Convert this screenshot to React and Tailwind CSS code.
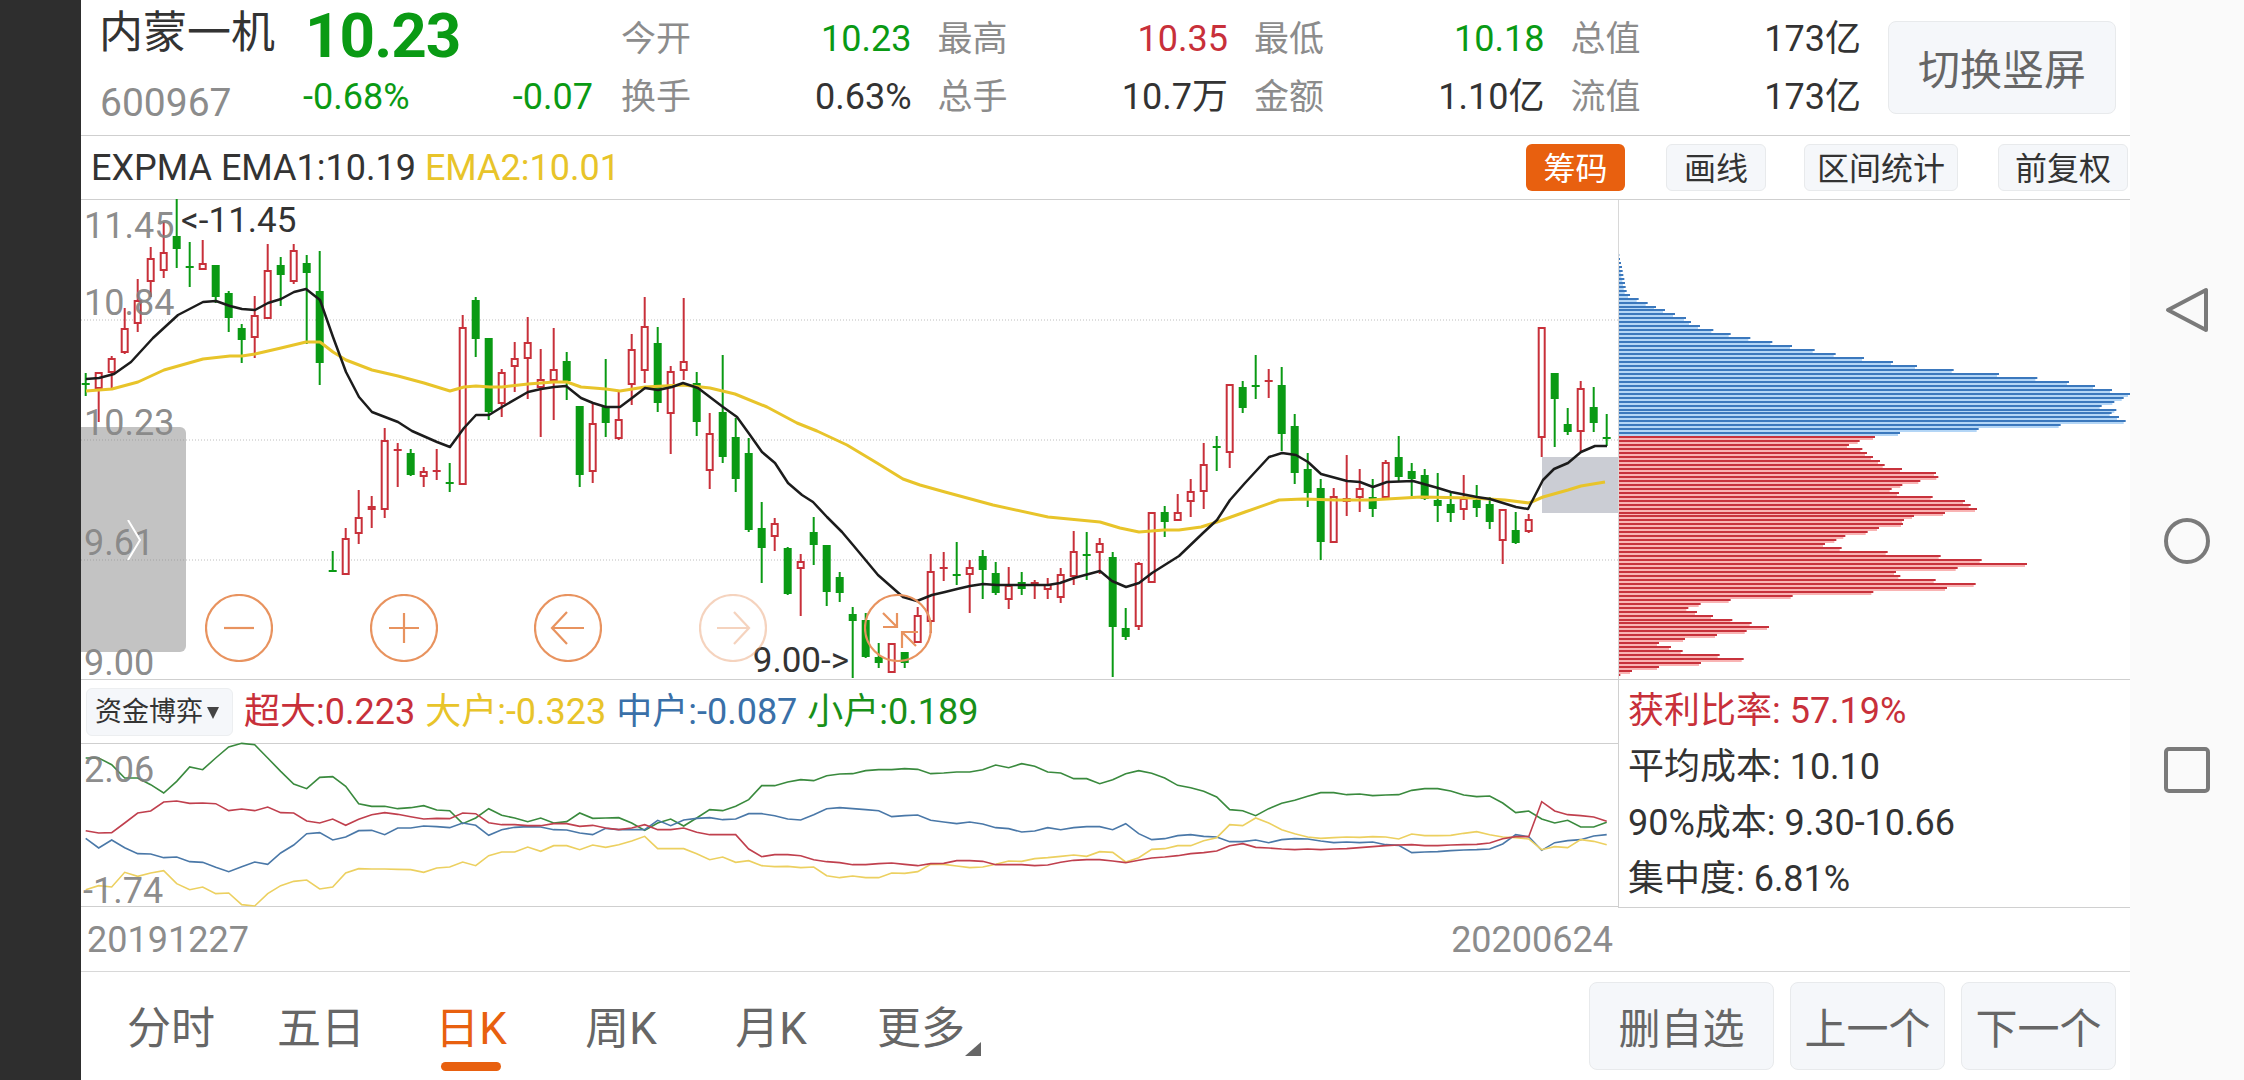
const GREEN = '#0a9a14'
const RED = '#c8303a'

// [type, bodyTop, bodyBottom, wickTop, wickBottom] in page px, one per trading day
const CANDLES = [
  ['g',383,385,373,396],['r',372,389,372,422],['r',358,373,356,388],['r',328,353,308,354],['r',300,324,279,332],
  ['r',258,282,247,297],['r',252,271,222,278],['g',236,249,199,268],['g',266,268,242,287],['r',263,270,240,270],
  ['g',265,297,265,303],['g',293,318,291,332],['g',328,340,324,363],['r',315,338,296,358],['r',270,319,244,319],
  ['g',265,275,257,306],['r',250,282,244,284],['g',263,273,255,344],['g',291,363,251,385],['g',570,572,551,572],
  ['r',538,575,528,575],['r',517,534,490,544],['r',506,510,496,528],['r',440,510,428,518],['r',449,451,443,487],
  ['g',453,475,449,476],['r',471,477,467,487],['r',470,472,449,480],['g',482,484,463,492],['r',327,485,315,485],
  ['g',300,339,297,357],['g',338,412,338,420],['r',372,404,369,417],['r',358,367,342,392],['r',342,359,317,399],
  ['r',379,388,349,437],['r',369,381,328,420],['g',361,381,352,400],['g',406,475,406,487],['r',423,472,403,483],
  ['g',407,423,359,437],['r',419,439,392,440],['r',349,385,334,405],['r',326,371,297,383],['g',343,403,327,412],
  ['r',371,414,366,454],['r',361,371,298,380],['g',383,422,372,436],['r',433,471,413,489],['g',412,457,355,463],
  ['g',437,479,418,492],['g',453,530,438,532],['g',528,548,502,583],['r',523,537,518,551],['g',548,594,547,595],
  ['r',561,569,554,616],['g',532,545,517,565],['g',545,592,545,606],['g',577,593,572,602],['g',614,621,607,678],
  ['g',620,657,613,658],['g',657,663,643,668],['r',643,673,643,673],['g',652,663,652,668],['r',615,643,607,643],
  ['r',571,622,554,633],['r',567,569,552,581],['g',574,576,542,585],['r',567,575,560,613],['g',556,570,550,599],
  ['g',573,593,562,595],['r',585,600,567,609],['g',582,589,572,595],['r',582,584,580,599],['r',584,590,578,599],
  ['r',574,598,568,603],['r',551,577,531,585],['g',554,556,532,580],['r',543,553,538,574],['g',557,627,552,677],
  ['g',628,637,608,640],['r',563,627,562,630],['r',512,583,512,583],['g',512,522,506,537],['r',512,521,494,521],
  ['r',491,502,479,517],['r',464,492,443,509],['g',446,448,436,471],['r',384,453,384,468],['g',387,408,381,413],
  ['g',385,387,355,399],['r',380,382,369,398],['g',385,434,367,451],['g',426,473,414,484],['g',469,493,453,507],
  ['g',488,542,479,560],['r',496,543,488,543],['r',498,502,455,516],['r',488,498,469,512],['g',497,509,479,517],
  ['r',462,498,460,498],['g',457,477,436,481],['g',471,479,463,496],['g',475,499,469,500],['g',500,506,473,522],
  ['g',504,513,493,522],['r',498,510,475,520],['g',500,508,485,517],['g',504,522,497,529],['r',509,541,509,564],
  ['g',530,543,512,544],['r',519,532,514,533],['r',327,438,327,457],['g',373,399,373,447],['g',424,432,408,435],
  ['r',388,432,381,452],['g',407,423,387,432],['g',437,439,414,446],
]

const EMA1 = '86,379 99,378 114,374 131,362 153,338 178,315 203,302 216,301 230,306 242,309 255,310 268,303 281,299 294,292 306,289 320,300 333,337 346,372 359,397 372,412 398,422 412,431 437,442 450,447 464,428 476,415 489,415 502,407 528,392 541,389 554,387 566,386 581,398 593,403 606,407 620,407 632,398 645,388 658,390 672,387 683,383 698,388 723,407 737,417 750,435 762,452 775,463 788,483 802,495 813,502 827,517 842,532 853,545 878,575 903,597 917,601 932,595 945,592 957,589 970,586 983,584 997,585 1022,585 1035,585 1048,585 1060,583 1074,578 1100,571 1112,581 1126,587 1139,583 1152,573 1179,556 1203,533 1217,520 1230,500 1245,483 1269,457 1282,453 1296,455 1308,462 1321,474 1347,481 1360,482 1373,487 1387,482 1413,481 1438,488 1451,492 1477,497 1490,499 1516,507 1528,509 1543,480 1554,469 1568,463 1581,452 1595,446 1607,446'
const EMA2 = '86,391 112,389 138,382 164,370 203,359 230,356 242,356 255,354 281,348 306,342 320,342 333,352 346,360 372,370 398,376 424,383 450,391 464,387 476,386 490,387 502,387 528,384 554,382 567,382 581,387 606,389 620,391 645,387 683,385 710,388 735,394 767,407 797,423 817,431 847,445 877,463 903,479 920,485 945,492 993,505 1048,517 1100,522 1120,528 1139,532 1164,530 1179,530 1201,527 1217,522 1245,512 1279,500 1303,499 1336,500 1370,500 1421,497 1472,498 1505,500 1529,503 1543,497 1568,490 1581,486 1605,482'

// money flow lines, y values at 3x from the top of the sub chart
const FLOW = [
  { color: '#3a8a3e', ys: [45,45,65,105,105,125,150,115,72,80,45,12,1,5,45,85,123,137,103,101,130,182,190,190,197,194,188,201,203,242,225,197,217,225,236,225,240,236,210,226,
    225,224,240,262,240,228,249,225,200,203,190,170,128,128,117,110,113,98,93,92,83,80,80,77,79,92,90,87,87,80,66,74,62,70,87,90,107,107,122,110,
    92,83,91,105,127,134,145,162,200,203,218,197,181,172,160,149,149,155,153,158,156,155,142,137,137,144,156,161,159,180,209,204,228,240,232,252,252,238] },
  { color: '#4a78a8', ys: [286,315,291,314,332,333,344,342,356,358,373,386,371,357,364,330,306,272,269,291,282,263,262,275,255,255,249,251,254,240,247,277,260,253,251,252,260,261,270,275,
    256,260,260,260,232,248,231,226,224,230,228,212,212,218,228,231,215,197,194,197,200,203,221,218,216,232,237,242,237,243,254,257,267,264,254,260,254,251,251,260,
    242,272,290,287,278,275,280,282,296,296,291,299,290,287,288,294,299,297,299,297,305,307,329,327,326,323,321,320,318,303,275,281,322,299,293,290,279,275] },
  { color: '#ecd060', ys: [440,428,432,388,400,390,383,422,440,432,452,450,485,489,452,428,415,411,438,432,390,377,378,378,379,380,388,375,372,357,368,338,327,327,312,325,308,308,320,306,
    313,305,294,280,317,317,317,332,350,342,358,353,368,371,370,374,372,398,404,399,404,404,390,391,386,364,364,369,374,372,364,354,355,347,344,340,336,340,326,328,
    357,344,319,317,308,308,293,284,245,248,225,240,260,272,282,286,284,282,283,281,282,288,273,278,278,277,271,266,275,282,284,288,320,311,314,290,295,305] },
  { color: '#c0404e', ys: [263,270,269,240,210,204,177,174,181,180,182,203,198,203,192,209,210,234,240,228,247,229,215,209,214,221,228,226,227,210,212,239,245,245,248,248,242,242,250,247,
    255,260,255,245,260,260,255,268,275,275,275,318,341,335,335,338,350,356,359,365,365,362,360,364,368,362,361,353,353,355,365,365,365,368,366,358,352,350,350,354,
    359,352,345,342,338,332,329,324,308,302,313,315,318,320,318,320,318,317,314,311,308,306,305,308,308,306,305,304,300,287,281,281,176,204,215,218,222,235] },
]

// chip distribution, bar ends at 3x
const CHIP_BLUE = [28,30,33,36,38,40,43,45,47,50,60,86,113,138,165,195,228,243,270,310,362,421,487,546,614,677,762,849,921,1031,1167,1282,1377,1455,1506,1560,1541,1513,1475,1519,1505,1527,1547,1352,1106,870]
const CHIP_RED = [795,749,717,757,771,789,810,824,876,978,985,931,877,845,867,968,1065,1082,1101,1005,912,882,879,807,773,706,679,645,695,833,992,1115,1251,1043,858,871,977,1097,1011,790,548,362,272,235,261,309,367,425,477,410,321,225,147,183,218,329,401,273,147,66,31]

const FONT = "Roboto, 'Noto Sans CJK SC', sans-serif"
const candleX = i => 85.7 + 13 * i

function Candle({ c, i }) {
  const [type, top, bottom, wickTop, wickBottom] = c
  const x = candleX(i)
  const color = type === 'g' ? GREEN : RED
  return (
    <g>
      <line x1={x} x2={x} y1={wickTop} y2={wickBottom} stroke={color} strokeWidth="2" />
      {type === 'g' || bottom - top < 4 ? (
        <rect x={x - 4} y={top} width="8" height={bottom - top} fill={color} />
      ) : (
        <rect x={x - 3} y={top + 1} width="6" height={bottom - top - 2} fill="#fff" stroke={color} strokeWidth="2" />
      )}
    </g>
  )
}

function MainChart() {
  const labels = [['11.45', 238], ['10.84', 315], ['10.23', 435], ['9.61', 555], ['9.00', 675]]
  return (
    <svg width="1537" height="479" viewBox="81 200 1537 479" className="block overflow-visible" fontFamily={FONT}>
      {[320, 440, 560].map(y => (
        <line key={y} x1="81" x2="1618" y1={y} y2={y} stroke="#bdbdbd" strokeDasharray="1 2" />
      ))}
      <rect x="1542" y="457" width="76" height="56" fill="#cbcdd4" />
      {CANDLES.map((c, i) => <Candle key={i} c={c} i={i} />)}
      <polyline points={EMA2} fill="none" stroke="#e8c42a" strokeWidth="3" strokeLinejoin="round" />
      <polyline points={EMA1} fill="none" stroke="#1c1c1c" strokeWidth="2.5" strokeLinejoin="round" />
      {labels.map(([t, y]) => (
        <text key={t} x="84" y={y} fontSize="36" fill="#7d7d7d" fillOpacity="0.9">{t}</text>
      ))}
      <text x="181" y="232" fontSize="35" fill="#333">{'<-11.45'}</text>
      <text x="849" y="672" fontSize="35" fill="#333" textAnchor="end">{'9.00->'}</text>
    </svg>
  )
}

function ChipChart() {
  const bars = [...CHIP_BLUE.map(v => [v, '#3b78bd', '#b4d6f6']), ...CHIP_RED.map(v => [v, '#c8323c', '#f9b4b4'])]
  return (
    <svg width="511" height="479" viewBox="1619 200 511 479" className="block">
      {bars.map(([v, dark, light], k) => {
        const y = Math.round(254 + 3.962 * k)
        const w = (v - 24) / 3
        return (
          <g key={k}>
            <rect x="1618" y={y + 2} width={w - 2} height="2" fill={light} />
            <rect x="1618" y={y} width={w} height="2" fill={dark} />
          </g>
        )
      })}
    </svg>
  )
}

function FlowChart() {
  return (
    <svg width="1537" height="162" viewBox="81 744 1537 162" className="block overflow-visible" fontFamily={FONT}>
      {FLOW.map(s => (
        <polyline
          key={s.color}
          points={s.ys.map((v, i) => `${candleX(i)},${743 + v / 3}`).join(' ')}
          fill="none"
          stroke={s.color}
          strokeWidth="1.6"
        />
      ))}
      <text x="84" y="782" fontSize="36" fill="#7d7d7d" fillOpacity="0.9">2.06</text>
      <text x="83" y="903" fontSize="36" fill="#7d7d7d" fillOpacity="0.9">-1.74</text>
    </svg>
  )
}

function RoundIcon({ left, faded, children }) {
  return (
    <div className={`absolute top-[394px] ${left} ${faded ? 'opacity-40' : ''}`}>
      <svg width="68" height="68" viewBox="0 0 68 68" fill="none" stroke="#e8935f" strokeWidth="2.2">
        <circle cx="34" cy="34" r="33" />
        {children}
      </svg>
    </div>
  )
}

function Quote({ label, value, color = 'text-[#333]' }) {
  return (
    <div className="flex items-center justify-between pr-[26px] text-[36px] leading-none">
      <span className="text-[35px] text-[#8c8c8c]">{label}</span>
      <span className={color}>{value}</span>
    </div>
  )
}

function GrayBtn({ className, children }) {
  return (
    <button className={`flex items-center justify-center rounded-lg border border-[#e8eaec] bg-[#f5f7fa] ${className}`}>
      {children}
    </button>
  )
}

export default function App() {
  const tabs = ['分时', '五日', '日K', '周K', '月K', '更多']
  return (
    <div className="flex h-screen w-full overflow-hidden bg-white" style={{ fontFamily: FONT }}>
      <div className="w-[81px] shrink-0 bg-[#2e2e2e]" />

      <div className="flex w-[2049px] shrink-0 flex-col">
        {/* Quote header */}
        <div className="flex h-[136px] border-b border-[#cfcfcf]">
          <div className="flex w-[540px] shrink-0 flex-col pl-[18px]">
            <div className="flex h-[72px] items-center">
              <span className="-mt-[6px] w-[206px] text-[44px] leading-none text-[#333]">内蒙一机</span>
              <span className="text-[62px] font-bold leading-none tracking-[-1px] text-[#0a9a14]">10.23</span>
            </div>
            <div className="flex h-[63px] items-center">
              <span className="w-[204px] pl-[1px] text-[39px] leading-none text-[#8c8c8c]">600967</span>
              <span className="-mt-[14px] text-[36px] leading-none text-[#0a9a14]">-0.68%</span>
              <span className="-mt-[14px] ml-auto pr-[28px] text-[36px] leading-none text-[#0a9a14]">-0.07</span>
            </div>
          </div>
          <div className="grid w-[1266px] shrink-0 grid-cols-4 grid-rows-[58px_58px] pt-[10px]">
            <Quote label="今开" value="10.23" color="text-[#0a9a14]" />
            <Quote label="最高" value="10.35" color="text-[#c8303a]" />
            <Quote label="最低" value="10.18" color="text-[#0a9a14]" />
            <Quote label="总值" value="173亿" />
            <Quote label="换手" value="0.63%" />
            <Quote label="总手" value="10.7万" />
            <Quote label="金额" value="1.10亿" />
            <Quote label="流值" value="173亿" />
          </div>
          <GrayBtn className="ml-[1px] mt-[21px] h-[93px] w-[228px] pt-[6px] text-[42px] text-[#666]">切换竖屏</GrayBtn>
        </div>

        {/* Indicator toolbar */}
        <div className="flex h-[64px] items-center border-b border-[#cfcfcf] pl-[10px] pr-[2px]">
          <span className="text-[36px] leading-none text-[#333]">EXPMA EMA1:10.19 <span className="text-[#e8c42a]">EMA2:10.01</span></span>
          <div className="ml-auto flex items-center text-[32px] text-[#333]">
            <span className="flex h-[47px] w-[99px] items-center justify-center rounded-md bg-[#e8600f] pt-[2px] text-white">筹码</span>
            <GrayBtn className="ml-[41px] h-[47px] w-[100px] rounded-md pt-[2px]">画线</GrayBtn>
            <GrayBtn className="ml-[38px] h-[47px] w-[154px] rounded-md pt-[2px]">区间统计</GrayBtn>
            <GrayBtn className="ml-[40px] h-[47px] w-[130px] rounded-md pt-[2px]">前复权</GrayBtn>
          </div>
        </div>

        {/* K line + chip distribution */}
        <div className="flex h-[480px] border-b border-[#cfcfcf]">
          <div className="relative w-[1537px] shrink-0">
            <MainChart />
            <div className="absolute left-0 top-[227px] flex h-[225px] w-[105px] items-center justify-center rounded-r-md bg-[#888888]/50">
              <svg width="16" height="40" viewBox="0 0 16 40" fill="none" stroke="#fff" strokeWidth="2">
                <polyline points="2,0 14,20 2,40" />
              </svg>
            </div>
            <RoundIcon left="left-[124px]"><path d="M19 34H49" /></RoundIcon>
            <RoundIcon left="left-[289px]"><path d="M19 34H49M34 19V49" /></RoundIcon>
            <RoundIcon left="left-[453px]"><path d="M50 34H18M33 18L18 34L33 50" /></RoundIcon>
            <RoundIcon left="left-[618px]" faded><path d="M18 34H50M35 18L50 34L35 50" /></RoundIcon>
            <RoundIcon left="left-[783px]"><path d="M19 19L33 33M19 33H33V19M38 38L52 52M38 54V38H54" /></RoundIcon>
          </div>
          <div className="flex-1 border-l border-[#d8d8d8]">
            <ChipChart />
          </div>
        </div>

        {/* Money flow + chip stats */}
        <div className="flex h-[228px]">
          <div className="w-[1537px] shrink-0">
            <div className="flex h-[64px] items-center border-b border-[#cfcfcf] pl-[5px]">
              <div className="flex h-[48px] w-[147px] items-center rounded-md border border-[#eceef0] bg-[#f5f7fa] pl-[8px] pt-[2px] text-[27px] text-[#333]">
                资金博弈
                <svg width="12" height="12" viewBox="0 0 12 12" className="ml-[4px]"><path d="M0 0H12L6 12Z" fill="#444" /></svg>
              </div>
              <div className="ml-[11px] flex gap-[10px] text-[36px] leading-none">
                <span className="text-[#c8303a]">超大:0.223</span>
                <span className="text-[#e8c42a]">大户:-0.323</span>
                <span className="text-[#3a70a8]">中户:-0.087</span>
                <span className="text-[#189018]">小户:0.189</span>
              </div>
            </div>
            <div className="h-[163px] border-b border-[#cfcfcf]">
              <FlowChart />
            </div>
          </div>
          <div className="flex flex-1 flex-col justify-around border-b border-l border-[#d0d0d0] pl-[9px] pt-[3px] text-[36px] leading-none text-[#333]">
            <span className="text-[#c8303a]">获利比率: 57.19%</span>
            <span>平均成本: 10.10</span>
            <span>90%成本: 9.30-10.66</span>
            <span>集中度: 6.81%</span>
          </div>
        </div>

        {/* Date range */}
        <div className="flex h-[64px] items-center justify-between border-b border-[#d8d8d8] pl-[6px] pr-[517px] text-[36px] leading-none text-[#8c8c8c]">
          <span>20191227</span>
          <span>20200624</span>
        </div>

        {/* Period tabs + actions */}
        <div className="flex flex-1">
          <div className="flex pl-[15px]">
            {tabs.map(t => (
              <div key={t} className={`relative flex w-[150px] items-center justify-center pt-[6px] text-[44px] leading-none ${t === '日K' ? 'text-[#e8600f]' : 'text-[#666]'}`}>
                {t}
                {t === '日K' && <span className="absolute bottom-[9px] left-[45px] h-[9px] w-[60px] rounded-full bg-[#e8600f]" />}
                {t === '更多' && (
                  <svg width="16" height="14" viewBox="0 0 16 14" className="absolute bottom-[24px] right-[15px]"><path d="M16 0V14H0Z" fill="#666" /></svg>
                )}
              </div>
            ))}
          </div>
          <div className="ml-auto flex gap-[16px] pr-[14px] pt-[10px] text-[42px] text-[#666]">
            <GrayBtn className="h-[88px] w-[185px] pt-[6px]">删自选</GrayBtn>
            <GrayBtn className="h-[88px] w-[155px] pt-[6px]">上一个</GrayBtn>
            <GrayBtn className="h-[88px] w-[155px] pt-[6px]">下一个</GrayBtn>
          </div>
        </div>
      </div>

      {/* Android nav bar */}
      <div className="flex flex-1 flex-col items-center bg-[#fafafa] pt-[287px]">
        <svg width="46" height="46" viewBox="0 0 46 46" fill="none" stroke="#7a7a7a" strokeWidth="4" className="mb-[185px]">
          <path d="M42 3V43L4 23Z" strokeLinejoin="round" />
        </svg>
        <svg width="46" height="46" viewBox="0 0 46 46" fill="none" stroke="#7a7a7a" strokeWidth="4" className="mb-[183px]">
          <circle cx="23" cy="23" r="21" />
        </svg>
        <svg width="46" height="46" viewBox="0 0 46 46" fill="none" stroke="#7a7a7a" strokeWidth="4">
          <rect x="2" y="2" width="42" height="42" rx="3" />
        </svg>
      </div>
    </div>
  )
}
